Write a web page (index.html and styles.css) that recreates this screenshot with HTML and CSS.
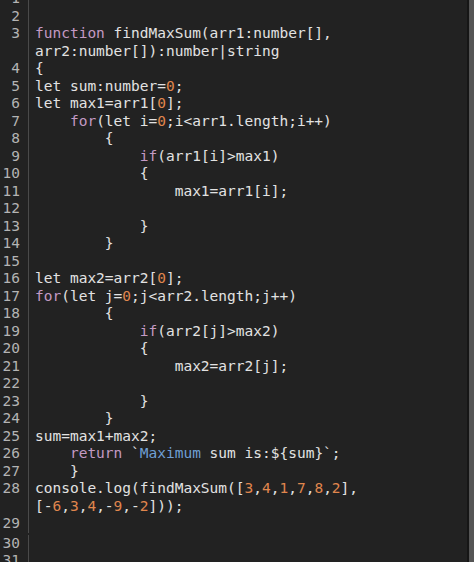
FILE: index.html
```html
<!DOCTYPE html>
<html>
<head>
<meta charset="utf-8">
<link rel="stylesheet" href="styles.css">
</head>
<body>
<div class="screen">
  <div class="editor">
    <div class="line"><span class="num">1</span><span class="code"></span></div>
    <div class="line"><span class="num">2</span><span class="code"></span></div>
    <div class="line"><span class="num">3</span><span class="code"><span class="kw">function</span> findMaxSum(arr1:number[],<br>arr2:number[]):number|string</span></div>
    <div class="line"><span class="num">4</span><span class="code">{</span></div>
    <div class="line"><span class="num">5</span><span class="code">let sum:number=<span class="n">0</span>;</span></div>
    <div class="line"><span class="num">6</span><span class="code">let max1=arr1[<span class="n">0</span>];</span></div>
    <div class="line"><span class="num">7</span><span class="code">    <span class="kw">for</span>(let i=<span class="n">0</span>;i&lt;arr1.length;i++)</span></div>
    <div class="line"><span class="num">8</span><span class="code">        {</span></div>
    <div class="line"><span class="num">9</span><span class="code">            <span class="kw">if</span>(arr1[i]&gt;max1)</span></div>
    <div class="line"><span class="num">10</span><span class="code">            {</span></div>
    <div class="line"><span class="num">11</span><span class="code">                max1=arr1[i];</span></div>
    <div class="line"><span class="num">12</span><span class="code"></span></div>
    <div class="line"><span class="num">13</span><span class="code">            }</span></div>
    <div class="line"><span class="num">14</span><span class="code">        }</span></div>
    <div class="line"><span class="num">15</span><span class="code"></span></div>
    <div class="line"><span class="num">16</span><span class="code">let max2=arr2[<span class="n">0</span>];</span></div>
    <div class="line"><span class="num">17</span><span class="code"><span class="kw">for</span>(let j=<span class="n">0</span>;j&lt;arr2.length;j++)</span></div>
    <div class="line"><span class="num">18</span><span class="code">        {</span></div>
    <div class="line"><span class="num">19</span><span class="code">            <span class="kw">if</span>(arr2[j]&gt;max2)</span></div>
    <div class="line"><span class="num">20</span><span class="code">            {</span></div>
    <div class="line"><span class="num">21</span><span class="code">                max2=arr2[j];</span></div>
    <div class="line"><span class="num">22</span><span class="code"></span></div>
    <div class="line"><span class="num">23</span><span class="code">            }</span></div>
    <div class="line"><span class="num">24</span><span class="code">        }</span></div>
    <div class="line"><span class="num">25</span><span class="code">sum=max1+max2;</span></div>
    <div class="line"><span class="num">26</span><span class="code">    <span class="kw">return</span> `<span class="str">Maximum</span> sum is:${sum}`;</span></div>
    <div class="line"><span class="num">27</span><span class="code">    }</span></div>
    <div class="line"><span class="num">28</span><span class="code">console.log(findMaxSum([<span class="n">3</span>,<span class="n">4</span>,<span class="n">1</span>,<span class="n">7</span>,<span class="n">8</span>,<span class="n">2</span>],<br>[-<span class="n">6</span>,<span class="n">3</span>,<span class="n">4</span>,-<span class="n">9</span>,-<span class="n">2</span>]));</span></div>
    <div class="line"><span class="num">29</span><span class="code"></span></div>
    <div class="line"><span class="num">30</span><span class="code"></span></div>
    <div class="line"><span class="num">31</span><span class="code"></span></div>
  </div>
  <div class="scrollbar"></div>
</div>
</body>
</html>
```

FILE: styles.css
```css
html, body {
  margin: 0;
  padding: 0;
  background: #222222;
  overflow: hidden;
}
.screen {
  display: flex;
  width: 474px;
  height: 562px;
  overflow: hidden;
  background: #222222;
}
.editor {
  flex: 1;
  margin-top: -10px;
  font-family: "DejaVu Sans Mono", monospace;
  font-size: 14.5px;
  line-height: 17.5px;
  color: #e2e2e2;
}
.line {
  display: flex;
}
.line:nth-child(29) {
  margin-bottom: 2px;
}
.num {
  flex: 0 0 29px;
  box-sizing: border-box;
  padding-right: 8px;
  text-align: right;
  color: #b4b4b4;
  border-right: 1px solid #4a4a4a;
}
.code {
  padding-left: 6px;
  white-space: pre;
  min-height: 17.5px;
}
.kw { color: #c49ac4; }
.n { color: #e0874e; }
.str { color: #6f9fd4; }
.scrollbar {
  flex: 0 0 5px;
  background: #555555;
  border-left: 2px solid #161616;
}
```
